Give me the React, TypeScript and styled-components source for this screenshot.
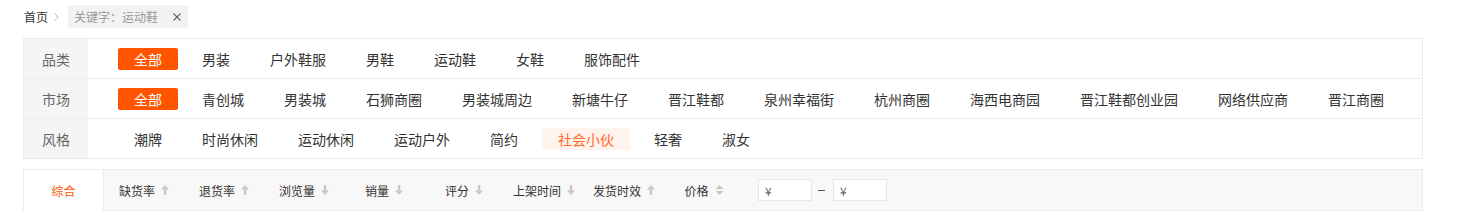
import React from "react";
import styled, { createGlobalStyle } from "styled-components";

const GlobalStyle = createGlobalStyle`
  body {
    margin: 0;
    background: #fff;
    font-family: "Noto Sans CJK SC", "Noto Sans", sans-serif;
    color: #333;
  }
`;

const categories = ["男装", "户外鞋服", "男鞋", "运动鞋", "女鞋", "服饰配件"];
const markets = [
  "青创城",
  "男装城",
  "石狮商圈",
  "男装城周边",
  "新塘牛仔",
  "晋江鞋都",
  "泉州幸福街",
  "杭州商圈",
  "海西电商园",
  "晋江鞋都创业园",
  "网络供应商",
  "晋江商圈",
];
const styles = ["潮牌", "时尚休闲", "运动休闲", "运动户外", "简约", "社会小伙", "轻奢", "淑女"];

type Dir = "up" | "down" | "both";
const sorts: { label: string; dir: Dir }[] = [
  { label: "缺货率", dir: "up" },
  { label: "退货率", dir: "up" },
  { label: "浏览量", dir: "down" },
  { label: "销量", dir: "down" },
  { label: "评分", dir: "down" },
  { label: "上架时间", dir: "down" },
  { label: "发货时效", dir: "up" },
  { label: "价格", dir: "both" },
];

const SortArrow = ({ dir }: { dir: Dir }) => {
  if (dir === "both") {
    return (
      <svg width="9" height="10" viewBox="0 0 9 10">
        <path d="M0.5 4 L4.5 0 L8.5 4 Z" fill="#c8c8c8" />
        <path d="M0.5 6 L4.5 10 L8.5 6 Z" fill="#c8c8c8" />
      </svg>
    );
  }
  return (
    <svg
      width="8"
      height="10"
      viewBox="0 0 8 10"
      style={{ transform: dir === "down" ? "rotate(180deg)" : undefined }}
    >
      <path d="M4 0 L8 4.5 L5.2 4.5 L5.2 10 L2.8 10 L2.8 4.5 L0 4.5 Z" fill="#c8c8c8" />
    </svg>
  );
};

export default function App() {
  return (
    <Page>
      <GlobalStyle />
      <Breadcrumb>
        <Crumb>首页</Crumb>
        <Sep>
          <svg width="5" height="8" viewBox="0 0 5 8">
            <path d="M0.5 0.5 L4 4 L0.5 7.5" stroke="#b5b5b5" fill="none" strokeWidth="1" />
          </svg>
        </Sep>
        <Tag>
          关键字：运动鞋
          <TagClose>
            <svg width="8" height="8" viewBox="0 0 8 8">
              <path d="M0.5 0.5 L7.5 7.5 M7.5 0.5 L0.5 7.5" stroke="#666" strokeWidth="1.1" />
            </svg>
          </TagClose>
        </Tag>
      </Breadcrumb>

      <FilterBox>
        <FilterRow>
          <RowLabel>品类</RowLabel>
          <Options>
            <Option $active>全部</Option>
            {categories.map((c) => (
              <Option key={c}>{c}</Option>
            ))}
          </Options>
        </FilterRow>
        <FilterRow>
          <RowLabel>市场</RowLabel>
          <Options>
            <Option $active>全部</Option>
            {markets.map((m) => (
              <Option key={m}>{m}</Option>
            ))}
          </Options>
        </FilterRow>
        <FilterRow>
          <RowLabel>风格</RowLabel>
          <Options>
            {styles.map((s) => (
              <Option key={s} $soft={s === "社会小伙"}>
                {s}
              </Option>
            ))}
          </Options>
        </FilterRow>
      </FilterBox>

      <SortBar>
        <SortTab>综合</SortTab>
        {sorts.map((s) => (
          <SortItem key={s.label}>
            {s.label}
            <SortArrow dir={s.dir} />
          </SortItem>
        ))}
        <PriceRange>
          <PriceInput>¥</PriceInput>
          <Dash />
          <PriceInput>¥</PriceInput>
        </PriceRange>
      </SortBar>
    </Page>
  );
}

const Page = styled.div`
  padding: 0 23px;
  width: 1400px;
`;

const Breadcrumb = styled.div`
  display: flex;
  align-items: center;
  height: 23px;
  padding-top: 5px;
  margin-bottom: 10px;
  font-size: 12px;
`;

const Crumb = styled.span`
  color: #333;
  line-height: 23px;
  margin-left: 1px;
`;

const Sep = styled.span`
  display: flex;
  align-items: center;
  margin: 0 9px 0 6px;
`;

const Tag = styled.span`
  display: flex;
  align-items: center;
  height: 23px;
  padding: 0 7px 0 6px;
  background: #f2f2f2;
  color: #999;
  line-height: 23px;
`;

const TagClose = styled.span`
  display: flex;
  align-items: center;
  margin-left: 15px;
`;

const FilterBox = styled.div`
  width: 1400px;
  box-sizing: border-box;
  border: 1px solid #ececec;
`;

const FilterRow = styled.div`
  display: flex;
  height: 39px;
  border-bottom: 1px solid #ececec;

  &:last-child {
    border-bottom: none;
  }
`;

const RowLabel = styled.div`
  width: 64px;
  flex-shrink: 0;
  display: flex;
  align-items: center;
  justify-content: center;
  background: #f5f5f5;
  color: #666;
  font-size: 14px;
`;

const Options = styled.div`
  display: flex;
  align-items: center;
  gap: 8px;
  padding-left: 30px;
`;

const Option = styled.span<{ $active?: boolean; $soft?: boolean }>`
  height: 22px;
  line-height: 22px;
  padding: 0 16px;
  border-radius: 2px;
  font-size: 14px;
  white-space: nowrap;
  color: ${({ $active, $soft }) => ($active ? "#fff" : $soft ? "#ff6a2a" : "#333")};
  background: ${({ $active, $soft }) => ($active ? "#ff5500" : $soft ? "#fff3ee" : "transparent")};
`;

const SortBar = styled.div`
  display: flex;
  align-items: center;
  width: 1400px;
  box-sizing: border-box;
  height: 42px;
  margin-top: 10px;
  border: 1px solid #ececec;
  background: #f8f8f8;
`;

const SortTab = styled.div`
  align-self: stretch;
  width: 79px;
  margin-bottom: -1px;
  display: flex;
  align-items: center;
  justify-content: center;
  background: #fff;
  border-right: 1px solid #ececec;
  color: #ff5500;
  font-size: 12px;
`;

const SortItem = styled.div`
  width: 80px;
  display: flex;
  align-items: center;
  justify-content: center;
  gap: 6px;
  font-size: 12px;
  color: #333;
  white-space: nowrap;
`;

const PriceRange = styled.div`
  display: flex;
  align-items: center;
  margin-left: 14px;
`;

const PriceInput = styled.div`
  width: 54px;
  height: 22px;
  box-sizing: border-box;
  display: flex;
  align-items: center;
  padding-left: 6px;
  background: #fff;
  border: 1px solid #e6e6e6;
  color: #666;
  font-size: 12px;
`;

const Dash = styled.span`
  width: 7px;
  height: 1px;
  margin: 0 8px 0 6px;
  background: #555;
`;
